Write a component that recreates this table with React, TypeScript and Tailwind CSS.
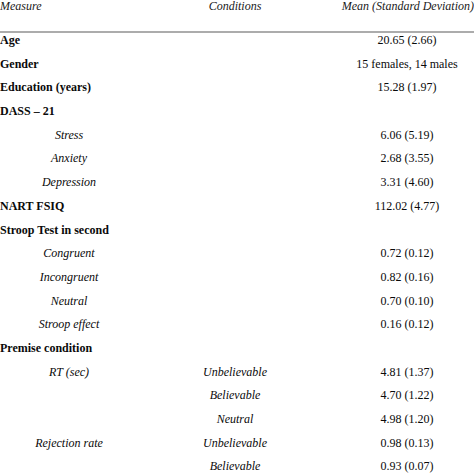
const rows: { m: string; c?: string; v?: string; kind: "head" | "sub" }[] = [
  { m: "Age", v: "20.65 (2.66)", kind: "head" },
  { m: "Gender", v: "15 females, 14 males", kind: "head" },
  { m: "Education (years)", v: "15.28 (1.97)", kind: "head" },
  { m: "DASS – 21", kind: "head" },
  { m: "Stress", v: "6.06 (5.19)", kind: "sub" },
  { m: "Anxiety", v: "2.68 (3.55)", kind: "sub" },
  { m: "Depression", v: "3.31 (4.60)", kind: "sub" },
  { m: "NART FSIQ", v: "112.02 (4.77)", kind: "head" },
  { m: "Stroop Test in second", kind: "head" },
  { m: "Congruent", v: "0.72 (0.12)", kind: "sub" },
  { m: "Incongruent", v: "0.82 (0.16)", kind: "sub" },
  { m: "Neutral", v: "0.70 (0.10)", kind: "sub" },
  { m: "Stroop effect", v: "0.16 (0.12)", kind: "sub" },
  { m: "Premise condition", kind: "head" },
  { m: "RT (sec)", c: "Unbelievable", v: "4.81 (1.37)", kind: "sub" },
  { m: "", c: "Believable", v: "4.70 (1.22)", kind: "sub" },
  { m: "", c: "Neutral", v: "4.98 (1.20)", kind: "sub" },
  { m: "Rejection rate", c: "Unbelievable", v: "0.98 (0.13)", kind: "sub" },
  { m: "", c: "Believable", v: "0.93 (0.07)", kind: "sub" },
];

export default function App() {
  return (
    <div
      className="w-[474px] h-[474px] overflow-hidden bg-white text-[#0a0a0a] text-[12px]"
      style={{ fontFamily: '"Liberation Serif", "Times New Roman", serif' }}
    >
      {/* Header */}
      <div className="grid grid-cols-[138px_194px_142px] h-[31px] italic leading-[13px] text-[#1a1a1a]">
        <div>Measure</div>
        <div className="text-center">Conditions</div>
        <div className="text-right whitespace-nowrap">Mean (Standard Deviation)</div>
      </div>
      <div className="h-[2px] bg-[#acacac]" />

      {/* Body */}
      <div>
        {rows.map((r, i) => (
          <div key={i} className="grid grid-cols-[138px_194px_150px] h-[23.7px] leading-[14px]">
            <div
              className={
                r.kind === "head"
                  ? "font-bold whitespace-nowrap"
                  : "italic text-center whitespace-nowrap"
              }
            >
              {r.m}
            </div>
            <div className="italic text-center">{r.c ?? ""}</div>
            <div className="text-center whitespace-nowrap">{r.v ?? ""}</div>
          </div>
        ))}
      </div>
    </div>
  );
}
